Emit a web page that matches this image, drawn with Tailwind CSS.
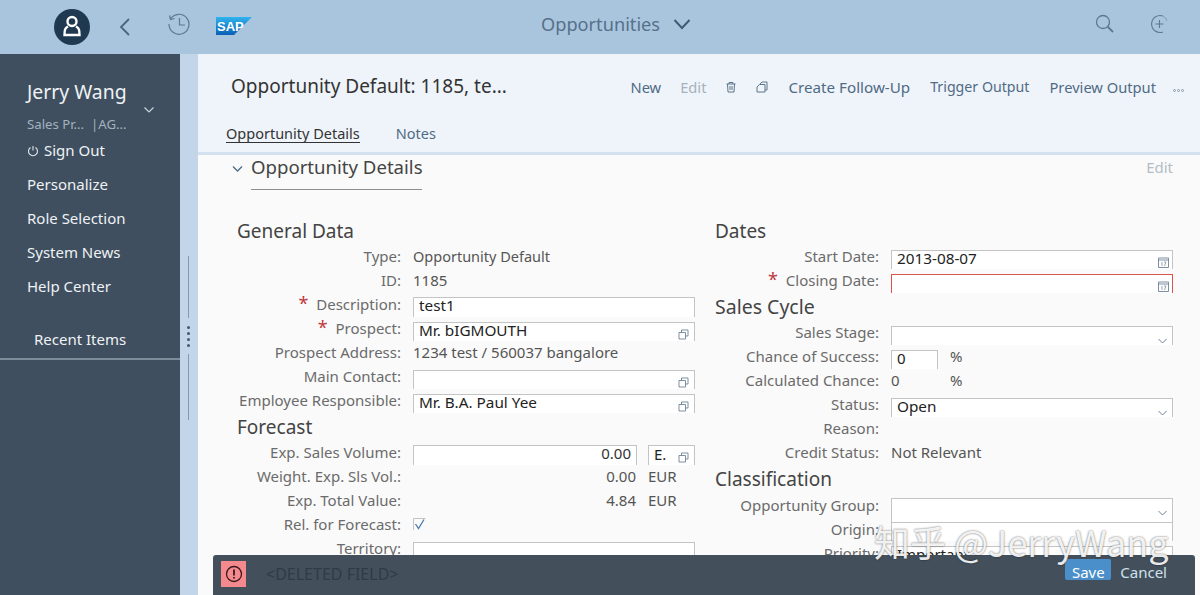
<!DOCTYPE html>
<html lang="en">
<head>
    <meta charset="UTF-8">
    <title>Opportunities</title>
    <script src="https://cdn.jsdelivr.net/npm/@tailwindcss/browser@4"></script>
</head>
<body class="relative h-[595px] overflow-hidden bg-[#fafafa] font-['Noto_Sans',sans-serif] text-[15px] text-[#555]">
    <!-- Shell header -->
    <header class="flex h-[54px] items-center bg-[#a9c5de] text-[#56708a]">
        <div class="ml-[54px] flex h-9 w-9 items-center justify-center rounded-full bg-[#1f3a50]">
            <svg width="22" height="26" viewBox="0 0 22 26" fill="none" stroke="#fff" stroke-width="2.4"><circle cx="11" cy="7.5" r="4.5"/><path d="M7 12.500 C4 14 3.500 16 3.500 21 H18.500 C18.500 16 18 14 15 12.500"/></svg>
        </div>
        <svg class="ml-[28px]" width="14" height="20" viewBox="0 0 14 20" fill="none" stroke="#4a6580" stroke-width="1.800"><path d="M11 2 L3 10 L11 18"/></svg>
        <svg class="mb-[6px] ml-[35px]" width="24" height="24" viewBox="0 0 24 24" fill="none" stroke="#5d7890" stroke-width="1.200"><path d="M3.500 7 A10 10 0 1 1 2 12"/><path d="M2.500 3.500 L3.500 7.500 L7.500 6.500"/><path d="M12.500 6 V13 H18"/></svg>
        <svg class="mb-[2px] ml-[25px]" width="36" height="19" viewBox="0 0 36 19"><defs><linearGradient id="sap" x1="0" x2="0" y1="0" y2="1"><stop offset="0" stop-color="#2fb4ee"/><stop offset="1" stop-color="#0a5fb4"/></linearGradient></defs><path d="M0 0 H36 L18 18 H0 Z" fill="url(#sap)"/><text x="1" y="14" font-family="Liberation Sans" font-size="13" font-weight="700" fill="#fff">SAP</text></svg>
        <div class="mb-[4px] ml-[289px] text-[18.2px]">Opportunities</div>
        <svg class="mb-[6px] ml-[13px]" width="18" height="12" viewBox="0 0 18 12" fill="none" stroke="#3f5a74" stroke-width="2"><path d="M1.500 2 L9 10 L16.500 2"/></svg>
        <svg class="mb-[6px] ml-[404px]" width="20" height="20" viewBox="0 0 20 20" fill="none" stroke="#5d7890" stroke-width="1.300"><circle cx="8" cy="8" r="6.500"/><path d="M12.500 12.500 L18 18" stroke-width="1.800"/></svg>
        <svg class="mb-[6px] ml-[34px]" width="20" height="22" viewBox="0 0 20 22" fill="none" stroke="#5d7890" stroke-width="1.100"><path d="M14 3 A8.500 8.500 0 1 0 14 19"/><path d="M14 3 A8.500 8.500 0 0 1 18 8" stroke-opacity=".4"/><path d="M10.500 7 V15 M6.500 11 H14.500"/></svg>
    </header>

    <div class="flex h-[541px]">
        <!-- Side menu -->
        <aside class="w-[180px] shrink-0 bg-[#3f4f5f] text-[#eef2f5]">
            <div class="flex pt-[24px] pl-[27px]">
                <div>
                    <div class="h-[27px] text-[19.4px] leading-[27px]">Jerry Wang</div>
                    <div class="mt-[10px] h-[18px] text-[13.200px] leading-[18px] whitespace-nowrap text-[#a3b2bf]">Sales Pr... &nbsp;|AG...</div>
                </div>
                <svg class="mt-[28px] ml-[16px]" width="12" height="8" viewBox="0 0 12 8" fill="none" stroke="#c9d3db" stroke-width="1.200"><path d="M1.500 1.500 L6 6 L10.500 1.500"/></svg>
            </div>
            <div class="flex h-[34px] items-center pl-[27px]">
                <svg class="mt-[2px] mr-[5px]" width="12" height="12" viewBox="0 0 12 12" fill="none" stroke="#dfe5ea" stroke-width="1.100"><path d="M3.500 2.500 A4.500 4.500 0 1 0 8.500 2.500 M6 1 V5.500"/></svg>
                Sign Out
            </div>
            <div class="flex h-[34px] items-center pl-[27px]">Personalize</div>
            <div class="flex h-[34px] items-center pl-[27px]">Role Selection</div>
            <div class="flex h-[34px] items-center pl-[27px]">System News</div>
            <div class="flex h-[34px] items-center pl-[27px]">Help Center</div>
            <div class="mt-[20px] flex h-[37px] items-center border-b-2 border-[#7d8c99] pb-[2px] pl-[34px]">Recent Items</div>
        </aside>

        <!-- Splitter -->
        <div class="relative w-[18px] shrink-0 bg-[#c3d5e8]">
            <div class="absolute top-[202px] left-[8px] h-[62px] w-px bg-[#8298ae]"></div>
            <div class="absolute top-[272px] left-[7px] flex flex-col gap-[3px]">
                <span class="h-[3px] w-[3px] rounded-full bg-[#3f5a74]"></span>
                <span class="h-[3px] w-[3px] rounded-full bg-[#3f5a74]"></span>
                <span class="h-[3px] w-[3px] rounded-full bg-[#3f5a74]"></span>
                <span class="h-[3px] w-[3px] rounded-full bg-[#3f5a74]"></span>
            </div>
            <div class="absolute top-[300px] left-[8px] h-[66px] w-px bg-[#8298ae]"></div>
        </div>

        <main class="min-w-0 flex-1">
            <!-- Object page header -->
            <section class="h-[101px] border-b-[3px] border-[#d3e1ee] bg-[#eff4fa]">
                <div class="flex h-[66px] items-center pr-[16px] pl-[33px]">
                    <h1 class="mb-[2px] text-[19px] text-[#333]">Opportunity Default: 1185, te...</h1>
                    <div class="ml-auto flex items-center text-[14.7px] text-[#4f6b85]">
                        <span>New</span>
                        <span class="ml-[19px] text-[#a5b1bc]">Edit</span>
                        <svg class="ml-[19px]" width="12" height="12" viewBox="0 0 12 12" fill="none" stroke="#5f7488"><path d="M1.500 3 H10.500 M4 3 V1.500 H8 V3 M2.500 3 L3 11 H9 L9.500 3 M5 5 V9 M7 5 V9"/></svg>
                        <svg class="ml-[19px]" width="12" height="12" viewBox="0 0 12 12" fill="none" stroke="#5f7488"><path d="M3.500 3.500 L6 1 H11 V9 H9 M1 6 L3.500 3.500 H9 V11 H1 Z"/></svg>
                        <span class="ml-[20px] text-[15.2px]">Create Follow-Up</span>
                        <span class="ml-[20px] text-[14.2px]">Trigger Output</span>
                        <span class="ml-[20px]">Preview Output</span>
                        <svg class="mt-[7px] ml-[17px]" width="11" height="3" viewBox="0 0 11 3" fill="none" stroke="#7a8a99" stroke-width=".8"><circle cx="1.500" cy="1.500" r="1"/><circle cx="5.500" cy="1.500" r="1"/><circle cx="9.500" cy="1.500" r="1"/></svg>
                    </div>
                </div>
                <div class="mt-[4px] flex items-start pl-[28px] text-[14.5px]">
                    <span class="border-b border-[#333] leading-[18px] text-[#333]">Opportunity Details</span>
                    <span class="ml-[36px] leading-[18px] text-[#4f6b85]">Notes</span>
                </div>
            </section>

            <!-- Section title -->
            <div class="flex h-[34px] items-start pr-[27px] pl-[34px]">
                <svg class="mt-[10px]" width="11" height="8" viewBox="0 0 11 8" fill="none" stroke="#4f6b85" stroke-width="1.300"><path d="M1 1.500 L5.500 6 L10 1.500"/></svg>
                <div class="ml-[8px] w-[171px] border-b border-[#8f8f8f] pb-[10px] text-[18.6px] leading-[24px] whitespace-nowrap text-[#444]">Opportunity Details</div>
                <span class="mt-[1px] ml-auto text-[#b5bcc3]">Edit</span>
            </div>

            <!-- Form columns -->
            <div class="mt-[29px] grid grid-cols-[458px_458px] gap-x-[20px] pl-[39px]">
                <div>
                    <h2 class="h-[27px] text-[19px] leading-[26px] text-[#444]">General Data</h2>
                    <div class="flex h-6"><label class="w-[164px] text-right text-[#6b6b6b]">Type:</label><span class="ml-[12px] pt-[1px] text-[14.5px]">Opportunity Default</span></div>
                    <div class="flex h-6"><label class="w-[164px] text-right text-[#6b6b6b]">ID:</label><span class="ml-[12px]">1185</span></div>
                    <div class="flex h-6"><label class="w-[164px] text-right text-[#6b6b6b]"><span class="mr-[4px] text-[18px] leading-none text-[#c0393f]">*</span> Description:</label><div class="mt-[4px] ml-[12px] h-[20px] w-[282px] border-x border-t border-[#c4c4c4] bg-white px-[5px] text-[15.3px] leading-[14px] text-[#222]">test1</div></div>
                    <div class="flex h-6"><label class="w-[164px] text-right text-[#6b6b6b]"><span class="mr-[4px] text-[18px] leading-none text-[#c0393f]">*</span> Prospect:</label>
                        <div class="mt-[5px] ml-[12px] flex h-[19px] w-[282px] items-center justify-between border-x border-t border-[#c4c4c4] bg-white px-[5px] text-[15.3px] text-[#222]"><span class="-mt-[3px]">Mr. bIGMOUTH</span>
                            <svg class="mt-[4px]" width="11" height="11" viewBox="0 0 11 11" fill="none" stroke="#6f8296" stroke-width=".9"><path d="M3.500 3.500 V1 H10 V7 H7.500 M1 3.500 H7.500 V10 H1 Z"/></svg></div></div>
                    <div class="flex h-6"><label class="w-[164px] text-right text-[#6b6b6b]">Prospect Address:</label><span class="ml-[12px]">1234 test / 560037 bangalore</span></div>
                    <div class="flex h-6"><label class="w-[164px] text-right text-[#6b6b6b]">Main Contact:</label>
                        <div class="mt-[5px] ml-[12px] flex h-[19px] w-[282px] items-center justify-end border-x border-t border-[#c4c4c4] bg-white px-[5px]">
                            <svg class="mt-[4px]" width="11" height="11" viewBox="0 0 11 11" fill="none" stroke="#6f8296" stroke-width=".9"><path d="M3.500 3.500 V1 H10 V7 H7.500 M1 3.500 H7.500 V10 H1 Z"/></svg></div></div>
                    <div class="flex h-6"><label class="w-[164px] text-right whitespace-nowrap text-[#6b6b6b]">Employee Responsible:</label>
                        <div class="mt-[5px] ml-[12px] flex h-[19px] w-[282px] items-center justify-between border-x border-t border-[#c4c4c4] bg-white px-[5px] text-[15.3px] text-[#222]"><span class="-mt-[3px]">Mr. B.A. Paul Yee</span>
                            <svg class="mt-[4px]" width="11" height="11" viewBox="0 0 11 11" fill="none" stroke="#6f8296" stroke-width=".9"><path d="M3.500 3.500 V1 H10 V7 H7.500 M1 3.500 H7.500 V10 H1 Z"/></svg></div></div>
                    <h2 class="mt-[1px] h-[27px] text-[19px] leading-[26px] text-[#444]">Forecast</h2>
                    <div class="flex h-6"><label class="w-[164px] text-right text-[#6b6b6b]">Exp. Sales Volume:</label>
                        <div class="mt-[4px] ml-[12px] h-[20px] w-[224px] border-x border-t border-[#c4c4c4] bg-white px-[5px] text-right leading-[14px] text-[#333]">0.00</div>
                        <div class="mt-[4px] ml-[11px] flex h-[20px] w-[47px] items-center justify-between border-x border-t border-[#c4c4c4] bg-white px-[5px] text-[#222]"><span class="-mt-[3px]">E.</span>
                            <svg class="mt-[3px]" width="11" height="11" viewBox="0 0 11 11" fill="none" stroke="#6f8296" stroke-width=".9"><path d="M3.500 3.500 V1 H10 V7 H7.500 M1 3.500 H7.500 V10 H1 Z"/></svg></div></div>
                    <div class="flex h-6"><label class="w-[164px] text-right whitespace-nowrap text-[#6b6b6b]">Weight. Exp. Sls Vol.:</label><span class="ml-[12px] w-[224px] pr-[1px] text-right">0.00</span><span class="ml-[11px]">EUR</span></div>
                    <div class="flex h-6"><label class="w-[164px] text-right text-[#6b6b6b]">Exp. Total Value:</label><span class="ml-[12px] w-[224px] pr-[1px] text-right">4.84</span><span class="ml-[11px]">EUR</span></div>
                    <div class="flex h-6"><label class="w-[164px] text-right text-[#6b6b6b]">Rel. for Forecast:</label>
                        <svg class="mt-[5px] ml-[12px]" width="13" height="13" viewBox="0 0 13 13" fill="none"><path d="M.5 12 V.5 H12.500" stroke="#c4c4c4"/><path d="M2.500 6 L5.500 10.500 L11 1.500" stroke="#4a7aa8" stroke-width="1.300"/></svg></div>
                    <div class="flex h-6"><label class="w-[164px] text-right text-[#6b6b6b]">Territory:</label><div class="mt-[5px] ml-[12px] h-[19px] w-[282px] border-x border-t border-[#c4c4c4] bg-white"></div></div>
                </div>

                <div>
                    <h2 class="h-[27px] text-[19px] leading-[26px] text-[#444]">Dates</h2>
                    <div class="flex h-6"><label class="w-[164px] text-right text-[#6b6b6b]">Start Date:</label>
                        <div class="mt-[5px] ml-[12px] flex h-[19px] w-[282px] items-center justify-between border-x border-t border-[#c4c4c4] bg-white px-[5px] text-[15.3px] text-[#222]"><span class="-mt-[3px]">2013-08-07</span>
                            <svg class="mt-[4px] -mr-[2px]" width="11" height="12" viewBox="0 0 11 12" fill="none" stroke="#6f8296" stroke-width=".9"><path d="M.5 2 H10.500 V11.500 H.5 Z M.5 4 H10.500" /><path d="M4 6 V10 M6 6 H8 L6.500 10" stroke-width=".7"/></svg></div></div>
                    <div class="flex h-6"><label class="w-[164px] text-right text-[#6b6b6b]"><span class="mr-[4px] text-[18px] leading-none text-[#c0393f]">*</span> Closing Date:</label>
                        <div class="mt-[5px] ml-[12px] flex h-[19px] w-[282px] items-center justify-end border-x border-t border-[#d9534f] bg-white px-[5px]">
                            <svg class="mt-[4px] -mr-[2px]" width="11" height="12" viewBox="0 0 11 12" fill="none" stroke="#6f8296" stroke-width=".9"><path d="M.5 2 H10.500 V11.500 H.5 Z M.5 4 H10.500" /><path d="M4 6 V10 M6 6 H8 L6.500 10" stroke-width=".7"/></svg></div></div>
                    <h2 class="mt-[1px] h-[27px] text-[19.500px] leading-[26px] text-[#444]">Sales Cycle</h2>
                    <div class="flex h-6"><label class="w-[164px] text-right text-[#6b6b6b]">Sales Stage:</label>
                        <div class="mt-[5px] ml-[12px] flex h-[19px] w-[282px] items-center justify-end border-x border-t border-[#c4c4c4] bg-white px-[5px]">
                            <svg class="mt-[9px]" width="9" height="6" viewBox="0 0 9 6" fill="none" stroke="#6f8296"><path d="M.5 1 L4.500 5 L8.500 1"/></svg></div></div>
                    <div class="flex h-6"><label class="w-[164px] text-right text-[#6b6b6b]">Chance of Success:</label><div class="mt-[5px] ml-[12px] h-[19px] w-[47px] border-x border-t border-[#c4c4c4] bg-white px-[5px] leading-[15px] text-[#222]">0</div><span class="ml-[12px]">%</span></div>
                    <div class="flex h-6"><label class="w-[164px] text-right text-[#6b6b6b]">Calculated Chance:</label><span class="ml-[12px] w-[47px]">0</span><span class="ml-[12px]">%</span></div>
                    <div class="flex h-6"><label class="w-[164px] text-right text-[#6b6b6b]">Status:</label>
                        <div class="mt-[5px] ml-[12px] flex h-[19px] w-[282px] items-center justify-between border-x border-t border-[#c4c4c4] bg-white px-[5px] text-[15.3px] text-[#222]"><span class="-mt-[3px]">Open</span>
                            <svg class="mt-[9px]" width="9" height="6" viewBox="0 0 9 6" fill="none" stroke="#6f8296"><path d="M.5 1 L4.500 5 L8.500 1"/></svg></div></div>
                    <div class="flex h-6"><label class="w-[164px] text-right text-[#6b6b6b]">Reason:</label></div>
                    <div class="flex h-6"><label class="w-[164px] text-right text-[#6b6b6b]">Credit Status:</label><span class="ml-[12px]">Not Relevant</span></div>
                    <h2 class="mt-[1px] h-[28px] text-[19px] leading-[26px] text-[#444]">Classification</h2>
                    <div class="flex h-6"><label class="w-[164px] text-right text-[#6b6b6b]">Opportunity Group:</label>
                        <div class="mt-[4px] ml-[12px] flex h-[24px] w-[282px] items-center justify-end border-x border-t border-[#c4c4c4] bg-white px-[5px]">
                            <svg class="mt-[4px]" width="9" height="6" viewBox="0 0 9 6" fill="none" stroke="#6f8296"><path d="M.5 1 L4.500 5 L8.500 1"/></svg></div></div>
                    <div class="flex h-6"><label class="w-[164px] text-right text-[#6b6b6b]">Origin:</label><div class="mt-[4px] ml-[12px] h-[19px] w-[282px] border-x border-t border-[#c4c4c4] bg-white"></div></div>
                    <div class="flex h-6"><label class="w-[164px] text-right text-[#6b6b6b]">Priority:</label><div class="mt-[4px] ml-[12px] h-[19px] w-[282px] border-x border-t border-[#c4c4c4] bg-white px-[5px] leading-[15px] text-[#222]">Important</div></div>
                </div>
            </div>
        </main>
    </div>

    <!-- Watermark -->
    <div class="absolute top-[514px] left-[874px] z-20 font-['Noto_Sans_CJK_SC','Noto_Sans',sans-serif] text-[36px] whitespace-nowrap text-white/90 [text-shadow:0_0_2px_rgba(0,0,0,.65)]">知乎 @JerryWang</div>

    <!-- Footer message bar -->
    <div class="absolute top-[555px] left-[213px] z-10 flex h-[40px] w-[982px] items-start rounded-t-[3px] bg-[#43505c]">
        <div class="mt-[6px] ml-[8px] flex h-[26px] w-[25px] items-center justify-center bg-[#f58a8e]">
            <svg width="18" height="18" viewBox="0 0 18 18" fill="none" stroke="#3a1a1c" stroke-width="1.300"><circle cx="9" cy="9" r="7.500"/><path d="M9 4.500 V10.500 M9 12 V13.500" stroke-width="1.800"/></svg>
        </div>
        <span class="mt-[7px] ml-[20px] text-[16px] text-[#2f3b46]">&lt;DELETED FIELD&gt;</span>
        <div class="mt-[4px] ml-auto flex items-center">
            <button class="h-[21px] w-[46px] rounded-[2px] bg-[#4a8fc9] pt-[3px] leading-[21px] text-white">Save</button>
            <button class="mr-[28px] ml-[9px] h-[21px] pt-[3px] leading-[21px] text-[#cfe0ee]">Cancel</button>
        </div>
    </div>
</body>
</html>
